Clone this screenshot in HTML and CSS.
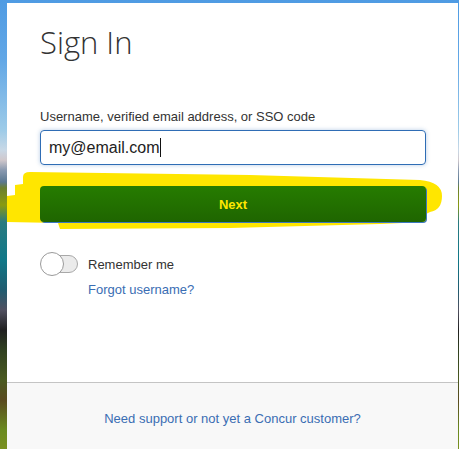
FILE: index.html
```html
<!DOCTYPE html>
<html lang="en">
<head>
<meta charset="utf-8">
<title>Sign In</title>
<link rel="stylesheet" href="styles.css">
</head>
<body>
<div class="card">
  <div class="card-body">
    <h1 class="title">Sign In</h1>
    <label class="label">Username, verified email address, or SSO code</label>
    <div class="field"><span class="value">my@email.com</span><span class="caret"></span></div>
    <button class="next">Next</button>
    <div class="remember">
      <span class="toggle"><span class="knob"></span></span>
      <span class="remember-text">Remember me</span>
    </div>
    <a class="forgot" href="#">Forgot username?</a>
  </div>
  <div class="card-footer">
    <a class="support" href="#">Need support or not yet a Concur customer?</a>
  </div>
</div>
<svg class="marker" width="459" height="449" viewBox="0 0 459 449" aria-hidden="true">
  <path d="M23 177 Q23 172 30 172 L250 175 L420 180 Q442 182 442 196 Q442 210 430 212 L426 214 L426 222 L380 224 L230 228 L60 229 L58 223 L7 222 L7 196 L15 195 L15 185 L23 184 Z" fill="#ffe600"/>
</svg>
</body>
</html>
```

FILE: styles.css
```css
html, body {
  margin: 0;
  height: 100%;
  overflow: hidden;
}
body {
  position: relative;
  padding: 3px 1px 0 7px;
  box-sizing: border-box;
  background: linear-gradient(to bottom,
    #4f9be3 0px, #62a7e6 60px, #9dcbe8 130px, #c8d8e6 150px, #d0c8cc 160px,
    #8a9ab0 170px, #5a7890 182px, #6a8030 188px, #8a9a10 205px, #2a7a80 222px,
    #107888 260px, #205c70 290px, #505060 310px, #202020 330px, #304020 350px,
    #4a5a20 380px, #5a4a20 400px, #6a8a20 430px, #7a9020 449px);
  font-family: "Liberation Sans", Arial, sans-serif;
  color: #333;
}
.card {
  background: #fff;
  width: 451px;
}
.card-body {
  padding: 21px 32px 85px 33px;
  display: flex;
  flex-direction: column;
  align-items: flex-start;
}
.title {
  margin: 0;
  font-family: "Open Sans", sans-serif;
  font-weight: 300;
  font-size: 31px;
  line-height: 36px;
  color: #333;
}
.label {
  margin-top: 49px;
  font-size: 13px;
  line-height: 15px;
  color: #333;
}
.field {
  margin-top: 6px;
  width: 386px;
  height: 35px;
  box-sizing: border-box;
  border: 1px solid #2f6db5;
  border-radius: 4px;
  box-shadow: 0 0 4px rgba(47, 109, 181, 0.35);
  display: flex;
  align-items: center;
  padding-left: 8px;
  font-size: 16px;
  color: #222;
}
.caret {
  width: 1px;
  height: 19px;
  background: #111;
  margin-left: 1px;
}
.next {
  position: relative;
  z-index: 2;
  margin-top: 21px;
  width: 386px;
  height: 36px;
  border: 0;
  border-radius: 4px;
  background: linear-gradient(to bottom, #267c00, #1f6500);
  box-shadow: 1px 1px 0 #3b78c0;
  color: #ffe800;
  font-family: "Liberation Sans", Arial, sans-serif;
  font-weight: bold;
  font-size: 13px;
  padding: 0;
}
.remember {
  margin-top: 30px;
  display: flex;
  align-items: center;
  gap: 10px;
}
.toggle {
  position: relative;
  width: 38px;
  height: 24px;
  display: flex;
  align-items: center;
}
.toggle::before {
  content: "";
  position: absolute;
  left: 6px;
  right: 0;
  top: 3px;
  height: 18px;
  box-sizing: border-box;
  border: 1px solid #a8a8a8;
  border-radius: 9px;
  background: #ebebeb;
}
.knob {
  position: relative;
  width: 24px;
  height: 24px;
  box-sizing: border-box;
  border-radius: 50%;
  border: 1px solid #9a9a9a;
  background: #fff;
}
.remember-text {
  font-size: 13px;
  line-height: 15px;
  color: #333;
}
.forgot {
  margin-top: 6px;
  margin-left: 48px;
  font-size: 13px;
  line-height: 15px;
  color: #3a6db3;
  text-decoration: none;
}
.card-footer {
  border-top: 1px solid #c4c4c4;
  background: #f8f8f8;
  padding: 26px 0 40px;
  text-align: center;
}
.support {
  font-size: 13px;
  line-height: 15px;
  color: #3a6db3;
  text-decoration: none;
}
.marker {
  position: absolute;
  top: 0;
  left: 0;
  z-index: 1;
  pointer-events: none;
}
```
